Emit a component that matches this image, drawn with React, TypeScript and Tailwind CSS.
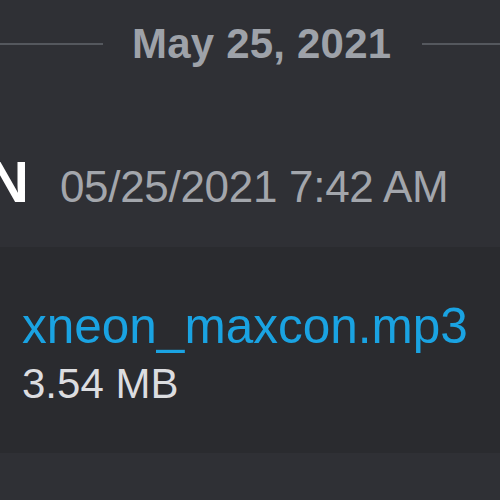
export default function App() {
  return (
    <div className="w-[500px] h-[500px] overflow-hidden bg-[#2f3035] flex flex-col" style={{ fontFamily: '"Liberation Sans", Arial, sans-serif' }}>
      {/* date divider */}
      <div className="flex items-center pt-[20px] h-[68px]">
        <div className="w-[103px] h-[2px] bg-[#55585e]" />
        <div className="ml-[29px] text-[42px] leading-none font-bold text-[#9ea2a9] tracking-[0.2px]">May 25, 2021</div>
        <div className="ml-[31px] flex-1 h-[2px] bg-[#55585e]" />
      </div>

      {/* message header */}
      <div className="flex items-baseline mt-[85px] h-[94px]">
        <span className="-ml-[13px] text-[58px] leading-none font-bold text-white">N</span>
        <span className="ml-[31px] text-[44px] leading-none text-[#a3a6ac] tracking-[-0.3px]">05/25/2021 7:42 AM</span>
      </div>

      {/* attachment */}
      <div className="h-[206px] bg-[#2a2b2f] pl-[22px] pt-[54px] flex flex-col">
        <div className="text-[49.5px] leading-none font-medium text-[#1aa3e2]">xneon_maxcon.mp3</div>
        <div className="mt-[12px] text-[42px] leading-none text-[#dcdde0]">3.54 MB</div>
      </div>
    </div>
  );
}
